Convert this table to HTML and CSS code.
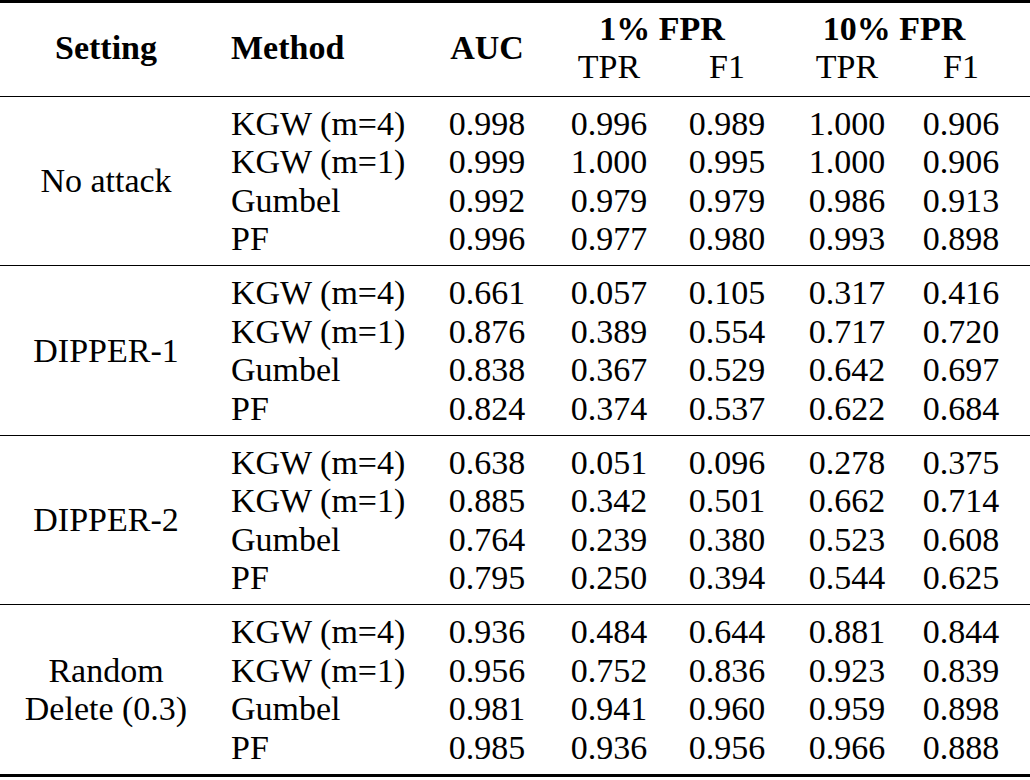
FILE: index.html
```html
<!DOCTYPE html>
<html lang="en">
<head>
<meta charset="utf-8">
<title>Watermark detection results</title>
<link rel="stylesheet" href="styles.css">
</head>
<body>
<div class="table">
  <div class="head grid">
    <div class="c-set span2 b">Setting</div>
    <div class="c-meth span2 b">Method</div>
    <div class="c-auc span2 b">AUC</div>
    <div class="grp1 b">1% FPR</div>
    <div class="grp2 b">10% FPR</div>
    <div class="num">TPR</div>
    <div class="num">F1</div>
    <div class="num">TPR</div>
    <div class="num">F1</div>
  </div>

  <div class="section grid">
    <div class="c-set span4">No attack</div>
    <div class="c-meth">KGW (m=4)</div><div class="num">0.998</div><div class="num">0.996</div><div class="num">0.989</div><div class="num">1.000</div><div class="num">0.906</div>
    <div class="c-meth">KGW (m=1)</div><div class="num">0.999</div><div class="num">1.000</div><div class="num">0.995</div><div class="num">1.000</div><div class="num">0.906</div>
    <div class="c-meth">Gumbel</div><div class="num">0.992</div><div class="num">0.979</div><div class="num">0.979</div><div class="num">0.986</div><div class="num">0.913</div>
    <div class="c-meth">PF</div><div class="num">0.996</div><div class="num">0.977</div><div class="num">0.980</div><div class="num">0.993</div><div class="num">0.898</div>
  </div>

  <div class="section grid">
    <div class="c-set span4">DIPPER-1</div>
    <div class="c-meth">KGW (m=4)</div><div class="num">0.661</div><div class="num">0.057</div><div class="num">0.105</div><div class="num">0.317</div><div class="num">0.416</div>
    <div class="c-meth">KGW (m=1)</div><div class="num">0.876</div><div class="num">0.389</div><div class="num">0.554</div><div class="num">0.717</div><div class="num">0.720</div>
    <div class="c-meth">Gumbel</div><div class="num">0.838</div><div class="num">0.367</div><div class="num">0.529</div><div class="num">0.642</div><div class="num">0.697</div>
    <div class="c-meth">PF</div><div class="num">0.824</div><div class="num">0.374</div><div class="num">0.537</div><div class="num">0.622</div><div class="num">0.684</div>
  </div>

  <div class="section grid">
    <div class="c-set span4">DIPPER-2</div>
    <div class="c-meth">KGW (m=4)</div><div class="num">0.638</div><div class="num">0.051</div><div class="num">0.096</div><div class="num">0.278</div><div class="num">0.375</div>
    <div class="c-meth">KGW (m=1)</div><div class="num">0.885</div><div class="num">0.342</div><div class="num">0.501</div><div class="num">0.662</div><div class="num">0.714</div>
    <div class="c-meth">Gumbel</div><div class="num">0.764</div><div class="num">0.239</div><div class="num">0.380</div><div class="num">0.523</div><div class="num">0.608</div>
    <div class="c-meth">PF</div><div class="num">0.795</div><div class="num">0.250</div><div class="num">0.394</div><div class="num">0.544</div><div class="num">0.625</div>
  </div>

  <div class="section last grid">
    <div class="c-set span4">Random<br>Delete (0.3)</div>
    <div class="c-meth">KGW (m=4)</div><div class="num">0.936</div><div class="num">0.484</div><div class="num">0.644</div><div class="num">0.881</div><div class="num">0.844</div>
    <div class="c-meth">KGW (m=1)</div><div class="num">0.956</div><div class="num">0.752</div><div class="num">0.836</div><div class="num">0.923</div><div class="num">0.839</div>
    <div class="c-meth">Gumbel</div><div class="num">0.981</div><div class="num">0.941</div><div class="num">0.960</div><div class="num">0.959</div><div class="num">0.898</div>
    <div class="c-meth">PF</div><div class="num">0.985</div><div class="num">0.936</div><div class="num">0.956</div><div class="num">0.966</div><div class="num">0.888</div>
  </div>
</div>
</body>
</html>
```
FILE: styles.css
```css
html, body {
  margin: 0;
  padding: 0;
  background: #fff;
}

body {
  font-family: "Liberation Serif", "Times New Roman", serif;
  font-size: 34px;
  line-height: 38.4px;
  color: #000;
}

.table {
  width: 1030px;
  border-top: 3px solid #000;
  border-bottom: 3px solid #000;
}

.grid {
  display: grid;
  grid-template-columns: 212px 218px 114px 130px 106px 134px 94px;
  grid-auto-rows: 38.4px;
}

.head {
  padding: 7px 0 9px;
  border-bottom: 1.5px solid #000;
}

.section {
  padding: 8px 0 7px;
  border-bottom: 1.5px solid #000;
}

.section.last {
  border-bottom: none;
}

.b {
  font-weight: bold;
}

.c-set {
  grid-column: 1;
  text-align: center;
  align-self: center;
}

.c-meth {
  grid-column: 2;
  padding-left: 19px;
  white-space: nowrap;
}

.c-auc {
  grid-column: 3;
  text-align: center;
}

.span2 {
  grid-row: 1 / span 2;
  align-self: center;
}

.span4 {
  grid-row: 1 / span 4;
}

.num {
  text-align: center;
  white-space: nowrap;
}

.grp1 {
  grid-column: 4 / span 2;
  grid-row: 1;
  text-align: center;
}

.grp2 {
  grid-column: 6 / span 2;
  grid-row: 1;
  text-align: center;
}

.head .num:nth-of-type(n) {
  grid-row: 2;
}
```
